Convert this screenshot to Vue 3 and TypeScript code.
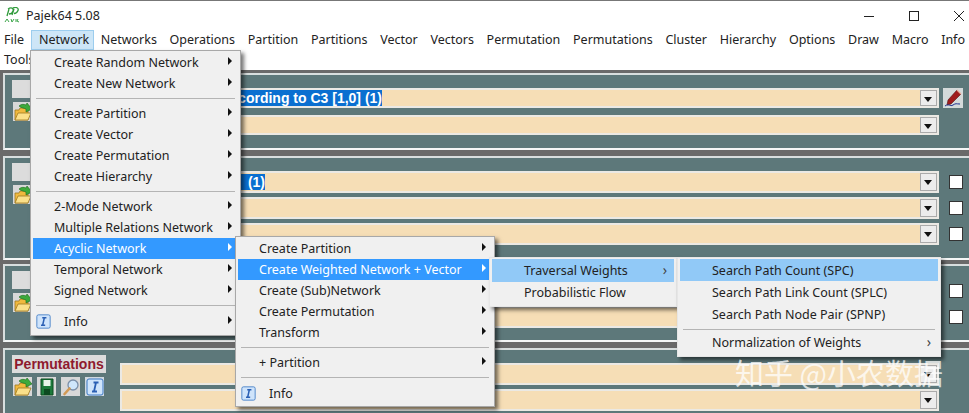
<script setup lang="ts">
const topMenu = ['File','Network','Networks','Operations','Partition','Partitions','Vector','Vectors','Permutation','Permutations','Cluster','Hierarchy','Options','Draw','Macro','Info']
type Item = { t?: string; arrow?: boolean; sep?: boolean; on?: boolean; info?: boolean }
const m1: Item[] = [
  {t:'Create Random Network',arrow:true},{t:'Create New Network',arrow:true},{sep:true},
  {t:'Create Partition',arrow:true},{t:'Create Vector',arrow:true},{t:'Create Permutation',arrow:true},{t:'Create Hierarchy',arrow:true},{sep:true},
  {t:'2-Mode Network',arrow:true},{t:'Multiple Relations Network',arrow:true},{t:'Acyclic Network',arrow:true,on:true},{t:'Temporal Network',arrow:true},{t:'Signed Network',arrow:true},{sep:true},
  {t:'Info',arrow:true,info:true}]
const m2: Item[] = [
  {t:'Create Partition',arrow:true},{t:'Create Weighted Network + Vector',arrow:true,on:true},{t:'Create (Sub)Network',arrow:true},{t:'Create Permutation',arrow:true},{t:'Transform',arrow:true},{sep:true},
  {t:'+ Partition',arrow:true},{sep:true},{t:'Info',info:true}]
const m4: Item[] = [
  {t:'Search Path Count (SPC)',on:true},{t:'Search Path Link Count (SPLC)'},{t:'Search Path Node Pair (SPNP)'},{sep:true},{t:'Normalization of Weights',arrow:true}]
</script>

<template>
  <div class="app">
    <header class="title">
      <svg class="logo" width="18" height="18" viewBox="0 0 18 18"><path d="M4 2c3-2 6-1 5 2s-3 3-4 3M5 2L3 9M9 1c3-1.500 6 0 5 2.500s-3 3-4 3M10 2L8 8" fill="none" stroke="#2f9a3a" stroke-width="1.300"/><path d="M1 15l2-3 2 3M7 12l1 3 2-3M12 12v3M14 12l-1 2 2 1" fill="none" stroke="#3aa548" stroke-width="1"/></svg>
      <span>Pajek64 5.08</span>
      <div class="winbtns">
        <svg width="12" height="12" viewBox="0 0 12 12"><path d="M1 6.500h10" stroke="#222"/></svg>
        <svg width="12" height="12" viewBox="0 0 12 12"><rect x="1.500" y="1.500" width="9" height="9" fill="none" stroke="#222"/></svg>
        <svg width="12" height="12" viewBox="0 0 12 12"><path d="M1 1l10 10M11 1L1 11" stroke="#222"/></svg>
      </div>
    </header>
    <nav class="menubar">
      <span v-for="m in topMenu" :key="m" class="mi" :class="{act: m==='Network'}">{{ m }}</span>
    </nav>
    <div class="toolrow">Tools</div>

    <div class="stack">
      <section class="panel p1">
        <div class="col-l"><div class="lab"></div><div class="ic"><svg class="folder" viewBox="0 0 18 18"><use href="#fold"/></svg></div></div>
        <div class="fields">
          <div class="fr"><div class="fld"><span class="sel s1">Network according to C3 [1,0] (1)</span><i class="dd"></i></div><div class="side"><div class="pen"><svg viewBox="0 0 20 20" width="20" height="20"><path d="M5 12L14 2l4 4-10 10-4 1z" fill="#a01c1c" stroke="#551010" stroke-width=".6"/><path d="M14 2l4 4" stroke="#e8b0a0" stroke-width="1.200"/><path d="M2 18c4-3 5 1 8-1s3-1 7-1" fill="none" stroke="#1d2f8f"/></svg></div></div></div>
          <div class="fr"><div class="fld"><i class="dd"></i></div><div class="side"></div></div>
        </div>
      </section>

      <section class="panel p2">
        <div class="col-l"><div class="lab"></div><div class="ic"><svg class="folder" viewBox="0 0 18 18"><use href="#fold"/></svg></div></div>
        <div class="fields">
          <div class="fr"><div class="fld"><span class="sel s2">according to&nbsp;&nbsp;(1)</span><i class="dd"></i></div><div class="side"><div class="chk"></div></div></div>
          <div class="fr"><div class="fld"><i class="dd"></i></div><div class="side"><div class="chk"></div></div></div>
          <div class="fr"><div class="fld"><i class="dd"></i></div><div class="side"><div class="chk"></div></div></div>
        </div>
      </section>

      <section class="panel p3">
        <div class="col-l"><div class="lab"></div><div class="ic"><svg class="folder" viewBox="0 0 18 18"><use href="#fold"/></svg></div></div>
        <div class="fields">
          <div class="fr"><div class="fld"><i class="dd"></i></div><div class="side"><div class="chk"></div></div></div>
          <div class="fr"><div class="fld"><i class="dd"></i></div><div class="side"><div class="chk"></div></div></div>
        </div>
      </section>

      <section class="panel p4">
        <div class="col-l">
          <div class="lab red">Permutations</div>
          <div class="icons">
            <div class="ic"><svg class="folder" viewBox="0 0 18 18"><use href="#fold"/></svg></div>
            <div class="ic"><svg class="folder" viewBox="0 0 18 18"><path d="M3 1h12v16H3z" fill="#1c7a3a" stroke="#0d4a20"/><path d="M5.500 2h7v6h-7z" fill="#e8f5ea"/><path d="M6 11h6v6H6z" fill="#0d4a20"/></svg></div>
            <div class="ic"><svg class="folder" viewBox="0 0 18 18"><circle cx="11" cy="7" r="5" fill="#cfe6fb" stroke="#7b8fa8" stroke-width="1.300"/><path d="M7.500 10.500L2.500 16" stroke="#d19a55" stroke-width="2.600" stroke-linecap="round"/></svg></div>
            <div class="ic blue"><svg class="folder" viewBox="0 0 18 18"><use href="#inf"/></svg></div>
          </div>
        </div>
        <div class="fields">
          <div class="fr"><div class="fld"><i class="dd"></i></div><div class="side"></div></div>
          <div class="fr"><div class="fld"><i class="dd"></i></div><div class="side"></div></div>
        </div>
      </section>
    </div>

    <svg width="0" height="0" class="defs">
      <defs>
        <g id="fold"><path d="M1 7h4l1-2h8v12H1z" fill="#f0b93e" stroke="#a07a20" stroke-width=".8"/><path d="M1 17l3-7h13l-3 7z" fill="#fbe08a" stroke="#a07a20" stroke-width=".8"/><path d="M5 3c2-2 5-2 7-1l1-2 5 6-6 3 0-3c-2-1-5-1-7-3z" fill="#3caa3c" stroke="#1c6a1c" stroke-width=".6"/></g>
        <g id="inf"><rect x="1" y="1" width="16" height="16" rx="2" fill="#cfe4fb" stroke="#3b78c4"/><path d="M7.500 4.500h5M6 13.500h5M10 4.500L8 13.500" stroke="#2a5fb4" stroke-width="1.800" fill="none"/></g>
      </defs>
    </svg>

    <div class="menu m1">
      <template v-for="(it,i) in m1" :key="i">
        <div v-if="it.sep" class="sep"></div>
        <div v-else class="row" :class="{on: it.on, hasinf: it.info}">
          <svg v-if="it.info" class="inf" viewBox="0 0 18 18"><use href="#inf"/></svg>
          <span>{{ it.t }}</span><i v-if="it.arrow" class="tri"></i>
        </div>
      </template>
    </div>
    <div class="menu m2">
      <template v-for="(it,i) in m2" :key="i">
        <div v-if="it.sep" class="sep"></div>
        <div v-else class="row" :class="{on: it.on, hasinf: it.info}">
          <svg v-if="it.info" class="inf" viewBox="0 0 18 18"><use href="#inf"/></svg>
          <span>{{ it.t }}</span><i v-if="it.arrow" class="tri"></i>
        </div>
      </template>
    </div>
    <div class="menu m3">
      <div class="row lite"><span>Traversal Weights</span><b class="chev">›</b></div>
      <div class="row"><span>Probabilistic Flow</span></div>
    </div>
    <div class="menu m4">
      <template v-for="(it,i) in m4" :key="i">
        <div v-if="it.sep" class="sep"></div>
        <div v-else class="row" :class="{lite: it.on}">
          <span>{{ it.t }}</span><b v-if="it.arrow" class="chev">›</b>
        </div>
      </template>
    </div>
    <div class="mark">知乎 @小农数据</div>
  </div>
</template>

<style>
html, body { margin: 0; background: #fff; overflow: hidden; }
</style>

<style scoped>
.app { width: 969px; height: 413px; position: relative; overflow: hidden; background: #6a6a6a; font-family: "Noto Sans", "Open Sans", sans-serif; font-size: 12.5px; color: #222; }
.defs { position: absolute; }
.title { height: 30px; background: #fff; display: flex; align-items: center; padding-left: 4px; gap: 4px; box-sizing: border-box; border-top: 1px solid #777; }
.winbtns { margin-left: auto; display: flex; gap: 33px; padding-right: 4px; }
.menubar { height: 20px; background: #fff; display: flex; align-items: center; }
.mi { padding: 0 6.35px; line-height: 20px; white-space: nowrap; }
.mi:first-child { padding: 0 7px 0 4px; }
.mi.act { background: #cde6f7; box-shadow: inset 0 0 0 1px #9ccdee; padding: 0 5px 0 8px; }
.toolrow { height: 20px; line-height: 20px; background: #fff; padding-left: 4px; }
.stack { display: flex; flex-direction: column; padding: 3px 0 0 3px; gap: 6px; }
.panel { display: flex; box-sizing: border-box; border: solid #d8dede; border-width: 2px 0 2px 2px; border-bottom-color: #f4f6f6; background: #5d787a; flex: none; }
.p1 { height: 77px; }
.p2 { height: 104px; }
.p3 { height: 78px; margin-top: -2px; }
.p4 { height: 70px; }
.col-l { width: 115px; padding: 5px 0 0 7px; flex: none; box-sizing: border-box; }
.lab { height: 18px; background: #dcdcdc; width: 94px; }
.lab.red { color: #8f1a2e; font-family: "Liberation Sans", sans-serif; font-weight: 700; font-size: 14px; line-height: 18px; text-align: center; }
.ic { width: 19px; height: 19px; background: #d8d8d8; display: flex; align-items: center; justify-content: center; margin: 4px 0 0 1px; }
.icons { display: flex; gap: 5px; padding-left: 1px; }
.icons .ic { margin-left: 0; }
.ic.blue { background: #cfd8e0; }
.folder { width: 18px; height: 18px; }
.fields { flex: 1; display: flex; flex-direction: column; gap: 4px; padding-top: 13px; }
.p1 .fields { gap: 7px; }
.p3 .fields { padding-top: 14px; }
.fr { display: flex; align-items: center; }
.fld { flex: 1; height: 22px; box-sizing: border-box; background: #f6deb6; border: 2px solid #ebe9e4; position: relative; display: flex; align-items: center; overflow: hidden; }
.p1 .fld { height: 20px; }
.sel { background: #0a6fd0; color: #fff; font-family: "Liberation Sans", sans-serif; font-weight: 700; font-size: 14px; line-height: 16px; white-space: nowrap; text-align: right; overflow: hidden; }
.s1 { width: 260px; }
.s2 { width: 143px; }
.dd { position: absolute; right: 0; top: 0; bottom: 0; width: 15px; background: #ececec; border: 1px solid #aaa; }
.dd::after { content: ""; position: absolute; left: 3px; top: 6px; border: 4px solid transparent; border-top: 5px solid #111; border-bottom: none; }
.side { width: 30px; flex: none; display: flex; }
.pen { width: 20px; height: 20px; background: #d4dada; margin-left: 4px; }
.chk { width: 12px; height: 12px; background: #fff; border: 1px solid #333; margin-left: 10px; flex: none; }
.menu { position: absolute; background: #f0f0f0; box-shadow: 3px 3px 4px rgba(0,0,0,.55); border: 1px solid #a8a8a8; padding: 1px 2px 0; box-sizing: border-box; white-space: nowrap; }
.m1 { left: 30px; top: 50px; width: 211px; height: 286px; }
.m2 { left: 235px; top: 236px; width: 260px; height: 171px; }
.m3 { left: 489px; top: 257px; width: 188px; height: 50px; border-color: #e6e6e6; }
.m4 { left: 677px; top: 257px; width: 264px; height: 100px; border-color: #e6e6e6; }
.row { height: 21px; display: flex; align-items: center; padding-left: 21px; position: relative; }
.row.on { background: #3399ff; color: #fff; }
.row.lite { background: #91c9f7; }
.row.hasinf { padding-left: 31px; margin-top: 5px; }
.m3 .row { padding-left: 32px; height: 23px; }
.m3 .row + .row { height: 21px; }
.m4 .row { padding-left: 32px; height: 22px; }
.sep { height: 1px; background: #b4b4b4; margin: 4px 3px; }
.m4 .sep { margin: 4px 3px 1px; }
.tri { position: absolute; right: 6px; top: 5px; border-left: 4px solid #111; border-top: 4px solid transparent; border-bottom: 4px solid transparent; }
.row.on .tri { border-left-color: #fff; }
.chev { position: absolute; right: 7px; top: 1px; font-weight: 400; color: #444; font-size: 14px; }
.inf { position: absolute; left: 3px; top: 3px; width: 15px; height: 15px; }
.mark { position: absolute; left: 735px; top: 353px; font-family: "Noto Sans CJK SC", sans-serif; font-size: 29px; color: rgba(255,255,255,.75); white-space: nowrap; line-height: 38px; }
</style>
